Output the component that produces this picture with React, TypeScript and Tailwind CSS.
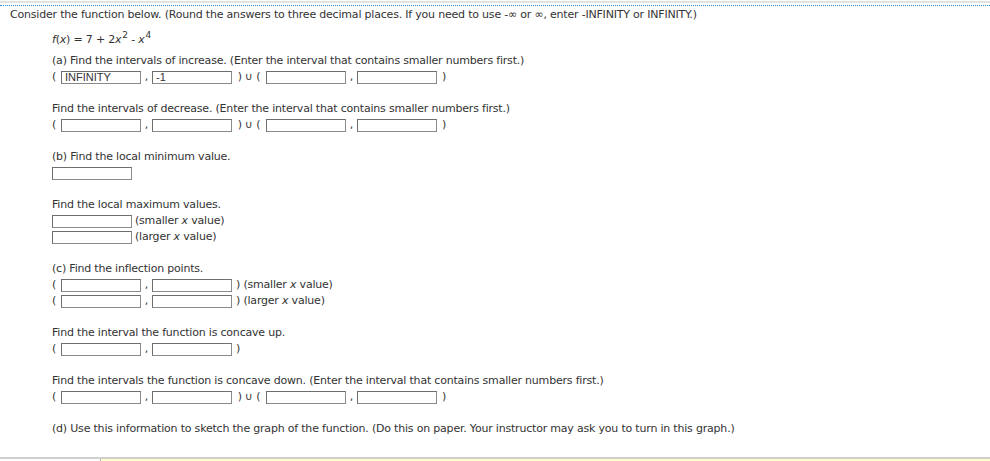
import React from "react";

const Box = ({ value = "" }: { value?: string }) => (
  <span className="inline-flex items-center w-[80px] h-[13px] border border-[#8a8a8a] border-t-[#6e6e6e] border-l-[#6e6e6e] bg-white pl-[3px] text-[11px] leading-[11px] tracking-normal text-[#333] overflow-hidden" style={{ fontFamily: '"Liberation Sans", Arial, sans-serif' }}>
    {value}
  </span>
);

const Line = ({ children, className = "" }: { children?: React.ReactNode; className?: string }) => (
  <div className={"flex items-center h-4 whitespace-nowrap " + className}>{children}</div>
);

const Open = () => <span className="w-[9px]">(</span>;
const Comma = () => <span className="w-[11px] text-center">,</span>;
const Union = () => <span className="w-[34px] text-center">) ∪ (</span>;

const IntervalPair = ({ a = "", b = "", after }: { a?: string; b?: string; after?: React.ReactNode }) => (
  <Line>
    <Open />
    <Box value={a} />
    <Comma />
    <Box value={b} />
    <span className="ml-[4px]">{after ?? ")"}</span>
  </Line>
);

const IntervalUnion = ({ a = "", b = "" }: { a?: string; b?: string }) => (
  <Line>
    <Open />
    <Box value={a} />
    <Comma />
    <Box value={b} />
    <Union />
    <Box />
    <Comma />
    <Box />
    <span className="ml-[5px]">)</span>
  </Line>
);

const Blank = () => <div className="h-4" />;

const Sup = ({ children }: { children: React.ReactNode }) => (
  <span className="text-[9px] relative -top-[5px] ml-[1px]">{children}</span>
);

export default function App() {
  return (
    <div
      className="w-[990px] h-[461px] overflow-hidden bg-white text-[#333] text-[11px] tracking-[-0.2px] flex flex-col"
      style={{ fontFamily: '"DejaVu Sans", Verdana, sans-serif' }}
    >
      <div className="border-t-2 border-[#e2e2e2] mt-px" />
      <div className="border-t border-dotted border-[#2b8ad6] mt-[2px]" />
      <Line className="pl-[10px] mt-px">
        Consider the function below. (Round the answers to three decimal places. If you need to use -∞ or ∞, enter -INFINITY or INFINITY.)
      </Line>
      <div className="pl-[52px] flex flex-col">
        <Line className="mt-[9px]">
          <span>
            <i>f</i>(<i>x</i>) = 7 + 2<i>x</i>
            <Sup>2</Sup> - <i>x</i>
            <Sup>4</Sup>
          </span>
        </Line>
        <Line className="mt-[5px]">(a) Find the intervals of increase. (Enter the interval that contains smaller numbers first.)</Line>
        <IntervalUnion a="INFINITY" b="-1" />
        <Blank />
        <Line>Find the intervals of decrease. (Enter the interval that contains smaller numbers first.)</Line>
        <IntervalUnion />
        <Blank />
        <Line>(b) Find the local minimum value.</Line>
        <Line>
          <Box />
        </Line>
        <Blank />
        <Line>Find the local maximum values.</Line>
        <Line>
          <Box />
          <span className="ml-[3px]">
            (smaller <i>x</i> value)
          </span>
        </Line>
        <Line>
          <Box />
          <span className="ml-[3px]">
            (larger <i>x</i> value)
          </span>
        </Line>
        <Blank />
        <Line>(c) Find the inflection points.</Line>
        <IntervalPair
          after={
            <>
              ) (smaller <i>x</i> value)
            </>
          }
        />
        <IntervalPair
          after={
            <>
              ) (larger <i>x</i> value)
            </>
          }
        />
        <Blank />
        <Line>Find the interval the function is concave up.</Line>
        <IntervalPair />
        <Blank />
        <Line>Find the intervals the function is concave down. (Enter the interval that contains smaller numbers first.)</Line>
        <IntervalUnion />
        <Blank />
        <Line>(d) Use this information to sketch the graph of the function. (Do this on paper. Your instructor may ask you to turn in this graph.)</Line>
      </div>
      <div className="mt-auto border-t-2 border-[#cfcfcf] flex h-[4px]">
        <div className="w-[100px]" />
        <div className="flex-1 border-l border-[#b5b5b5] bg-[#ffffcc]" />
      </div>
    </div>
  );
}
